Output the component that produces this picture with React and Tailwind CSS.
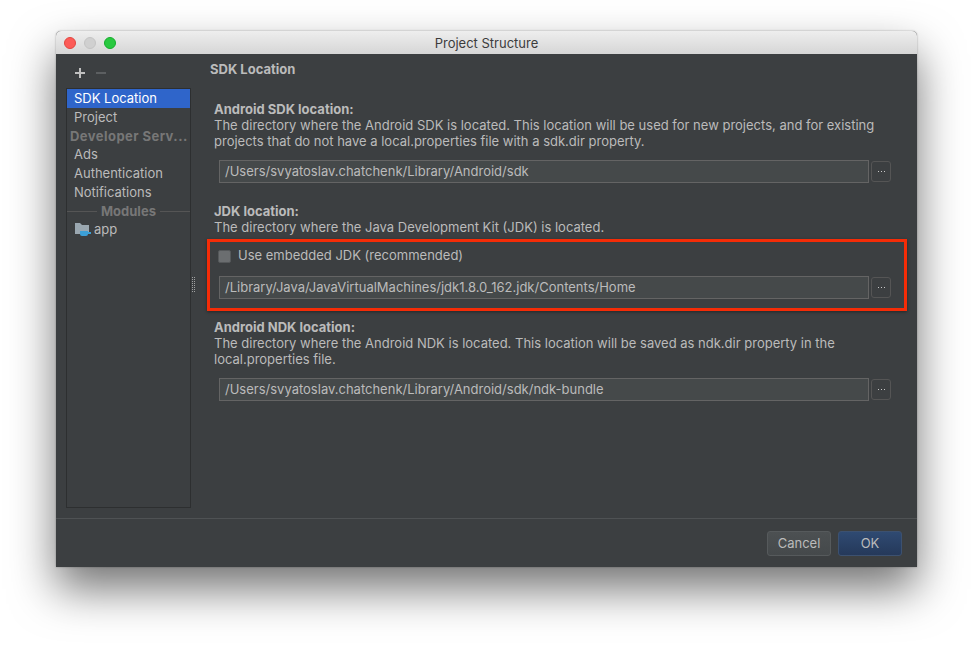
import React from 'react';

const PathField = ({ value, className = '' }) => (
  <div className={`flex items-center gap-[2px] ml-[5px] ${className}`}>
    <div className="w-[650px] h-[23px] flex items-center pl-[5px] bg-[#45494a] border border-[#646464] text-[13px] text-[#bbbbbb]">
      {value}
    </div>
    <div className="w-[20px] h-[21px] flex items-center justify-center rounded-[3px] border border-[#555555] bg-[#3c3f41]">
      <span className="flex gap-[2px]">
        <i className="w-[1px] h-[1px] bg-[#c8c8c8]" />
        <i className="w-[1px] h-[1px] bg-[#c8c8c8]" />
        <i className="w-[1px] h-[1px] bg-[#c8c8c8]" />
      </span>
    </div>
  </div>
);

const NavItem = ({ label, active }) => (
  <div className={`h-[18.75px] leading-[18.75px] pl-[7px] text-[13px] ${active ? 'bg-[#2f65ca] text-white' : 'text-[#bbbbbb]'}`}>
    {label}
  </div>
);

const Section = ({ title, children }) => (
  <div className="text-[13px] leading-[16px] text-[#bbbbbb]">
    <div className="font-bold">{title}</div>
    {children}
  </div>
);

export default function App() {
  return (
    <div className="w-[973px] h-[647px] bg-white pt-[31px] pl-[56px] overflow-hidden font-['Inter',sans-serif]">
      <div className="relative w-[861px] h-[536px] flex flex-col rounded-t-[5px] shadow-[0_22px_45px_rgba(0,0,0,0.55),0_0_2px_rgba(0,0,0,0.35)] bg-[#3c3f41]">
        {/* title bar */}
        <div className="relative h-[23px] flex items-center justify-center pt-[2px] rounded-t-[5px] bg-gradient-to-b from-[#eeeeee] to-[#d6d6d6] text-[13px] text-[#3c3c3c]">
          <div className="absolute left-[8px] top-[6px] flex gap-[8px]">
            <span className="w-[12px] h-[12px] rounded-full bg-[#fc5b57] border border-[#e2463f]" />
            <span className="w-[12px] h-[12px] rounded-full bg-[#d0d0d0] border border-[#c4c4c4]" />
            <span className="w-[12px] h-[12px] rounded-full bg-[#29c940] border border-[#14ae2b]" />
          </div>
          Project Structure
        </div>

        <div className="flex flex-1 min-h-0">
          {/* sidebar */}
          <div className="w-[135px] pl-[10px] pt-[7px] flex flex-col">
            <div className="h-[27px] flex items-center gap-[9px] pl-[8px] pb-[3px]">
              <svg width="12" height="12" viewBox="0 0 12 12"><path d="M6 1v10M1 6h10" stroke="#c0c0c0" strokeWidth="2" /></svg>
              <svg width="12" height="12" viewBox="0 0 12 12"><path d="M1 6h10" stroke="#5c5f61" strokeWidth="2" /></svg>
            </div>
            <div className="w-[125px] h-[420px] border border-[#2d2f30]">
              <NavItem label="SDK Location" active />
              <NavItem label="Project" />
              <div className="h-[18.75px] leading-[18.75px] pl-[3px] text-[13px] font-bold text-[#777777] whitespace-nowrap tracking-[0.45px]">Developer Serv...</div>
              <NavItem label="Ads" />
              <NavItem label="Authentication" />
              <NavItem label="Notifications" />
              <div className="h-[18.75px] flex items-center gap-[4px] pt-[1px] text-[13px] font-bold text-[#777777]">
                <span className="w-[30px] h-px bg-[#555555]" />
                Modules
                <span className="flex-1 h-px bg-[#555555]" />
              </div>
              <div className="h-[18.75px] flex items-center gap-[3px] pl-[8px] text-[13px] text-[#bbbbbb]">
                <svg width="16" height="15" viewBox="0 0 16 15">
                  <path d="M0 1h5l2 2h7v9H0z" fill="#9aa7b0" />
                  <path d="M5 9h8v3a2 2 0 0 1-2 2H7a2 2 0 0 1-2-2z" fill="#3c9fd6" />
                  <path d="M13 10h3v2h-3z" fill="#3c9fd6" />
                </svg>
                app
              </div>
            </div>
          </div>

          {/* splitter grip */}
          <div className="w-[10px] flex items-center pb-[14px] pl-[1px]">
            <div className="w-[3px] h-[15px] mt-[10px] border-x border-dotted border-[#a0a0a0]" />
          </div>

          {/* content */}
          <div className="flex-1 pt-[7px] pl-[13px]">
            <div className="text-[13px] leading-[16px] font-bold text-[#bbbbbb] -ml-[4px]">SDK Location</div>
            <div className="mt-[24px]">
              <Section title="Android SDK location:">
                <p className="w-[680px]">The directory where the Android SDK is located. This location will be used for new projects, and for existing projects that do not have a local.properties file with a sdk.dir property.</p>
              </Section>
            </div>
            <PathField value="/Users/svyatoslav.chatchenk/Library/Android/sdk" className="mt-[11px]" />
            <div className="mt-[20px]">
              <Section title="JDK location:">
                <p>The directory where the Java Development Kit (JDK) is located.</p>
              </Section>
            </div>
            <div className="mt-[13px] h-[16px] flex items-center gap-[7px] ml-[4px] text-[13px] text-[#bbbbbb]">
              <span className="w-[13px] h-[13px] rounded-[2px] bg-[#6b6e70] border border-[#55585a]" />
              Use embedded JDK (recommended)
            </div>
            <PathField value="/Library/Java/JavaVirtualMachines/jdk1.8.0_162.jdk/Contents/Home" className="mt-[12px]" />
            <div className="mt-[20px]">
              <Section title="Android NDK location:">
                <p className="w-[680px]">The directory where the Android NDK is located. This location will be saved as ndk.dir property in the local.properties file.</p>
              </Section>
            </div>
            <PathField value="/Users/svyatoslav.chatchenk/Library/Android/sdk/ndk-bundle" className="mt-[11px]" />
          </div>
        </div>

        {/* footer */}
        <div className="h-[49px] border-t border-[#4f5254] flex items-start justify-end gap-[7px] pt-[12px] pr-[15px] text-[13px]">
          <div className="w-[64px] h-[25px] flex items-center justify-center rounded-[3px] border border-[#565a5c] bg-gradient-to-b from-[#4c5052] to-[#45494b] text-[#bbbbbb]">Cancel</div>
          <div className="w-[64px] h-[25px] flex items-center justify-center rounded-[3px] border border-[#3c5170] bg-gradient-to-b from-[#2f4a72] to-[#25395a] text-[#bbbbbb]">OK</div>
        </div>

        {/* red annotation over the JDK fields */}
        <div className="absolute left-[151px] top-[208px] w-[700px] h-[72px] border-[3px] border-[#f52c07] shadow-[0_1px_3px_rgba(0,0,0,0.4)]" />
      </div>
    </div>
  );
}
